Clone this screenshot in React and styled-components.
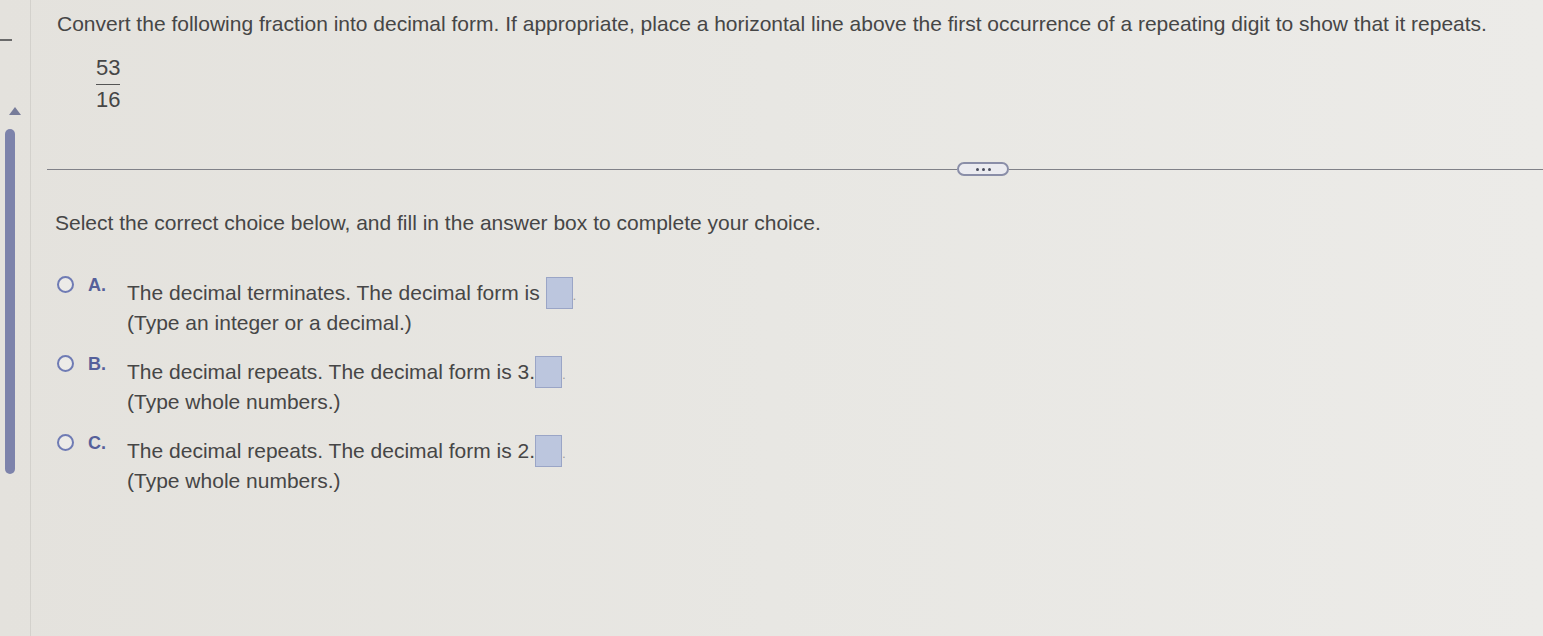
import React from 'react';
import styled, { createGlobalStyle } from 'styled-components';

const GlobalStyle = createGlobalStyle`
  html, body {
    margin: 0;
    padding: 0;
  }
  body {
    background: linear-gradient(90deg, #e4e2dd 0%, #e8e7e3 50%, #ecebe8 100%);
    font-family: "Liberation Sans", Arial, sans-serif;
    color: #464646;
  }
`;

const Page = styled.div`
  display: flex;
  height: 636px;
  overflow: hidden;
`;

const Gutter = styled.aside`
  width: 31px;
  flex-shrink: 0;
  border-right: 1px solid #d3d1cc;
  display: flex;
  flex-direction: column;
  align-items: flex-start;
  padding-top: 39px;
  box-sizing: border-box;
`;

const TopMark = styled.div`
  width: 12px;
  height: 2px;
  background: #6a6a6a;
`;

const ArrowUp = styled.div`
  margin: 66px 0 0 9px;
  width: 0;
  height: 0;
  border-left: 6px solid transparent;
  border-right: 6px solid transparent;
  border-bottom: 8px solid #777c9a;
`;

const Thumb = styled.div`
  margin: 14px 0 0 5px;
  width: 10px;
  height: 345px;
  border-radius: 5px;
  background: #7d83ab;
`;

const Main = styled.main`
  flex: 1;
  padding-top: 12px;
`;

const Question = styled.p`
  margin: 0 0 0 26px;
  font-size: 21px;
  line-height: 24px;
  white-space: nowrap;
`;

const Fraction = styled.div`
  display: inline-flex;
  flex-direction: column;
  align-items: center;
  margin: 20px 0 0 65px;
  font-size: 22px;
  line-height: 24px;
`;

const FractionBar = styled.span`
  align-self: stretch;
  height: 1px;
  margin: 4px 0 3px;
  background: #555;
`;

const DividerRow = styled.div`
  display: flex;
  align-items: center;
  margin-top: 50px;
  padding-left: 16px;
`;

const Rule = styled.div`
  height: 1px;
  background: #808188;
  flex: ${p => (p.$fill ? '1' : '0 0 910px')};
`;

const MorePill = styled.div`
  width: 52px;
  height: 14px;
  box-sizing: border-box;
  border: 2px solid #8a8ea8;
  border-radius: 7px;
  background: #ebebf0;
  display: flex;
  align-items: center;
  justify-content: center;
  gap: 3px;
`;

const Dot = styled.span`
  width: 3px;
  height: 3px;
  border-radius: 50%;
  background: #4a4d5e;
`;

const Prompt = styled.p`
  margin: 35px 0 0 24px;
  font-size: 21px;
  line-height: 24px;
`;

const Choices = styled.div`
  display: flex;
  flex-direction: column;
  gap: 20px;
  margin: 42px 0 0 26px;
`;

const Choice = styled.div`
  display: grid;
  grid-template-columns: 31px 39px auto;
  align-items: start;
`;

const Radio = styled.span`
  width: 17px;
  height: 17px;
  margin-top: -1px;
  box-sizing: border-box;
  border: 2px solid #6f7bb4;
  border-radius: 50%;
  background: #ecebe8;
`;

const Letter = styled.span`
  font-size: 18px;
  font-weight: bold;
  line-height: 17px;
  color: #55609a;
`;

const Body = styled.div`
  display: flex;
  flex-direction: column;
  font-size: 21px;
`;

const FirstLine = styled.div`
  display: flex;
  align-items: center;
  height: 32px;
  white-space: nowrap;
`;

const Hint = styled.div`
  line-height: 27px;
`;

const AnswerBox = styled.span`
  display: inline-block;
  width: 27px;
  height: 32px;
  margin-left: ${p => p.$gap}px;
  box-sizing: border-box;
  border: 1px solid #9aa5c6;
  background: #bcc6de;
`;

const Stop = styled.span`
  font-size: 12px;
  align-self: flex-end;
  margin-bottom: 6px;
  color: #999;
`;

const choices = [
  { letter: 'A.', text: 'The decimal terminates. The decimal form is', gap: 6, hint: '(Type an integer or a decimal.)' },
  { letter: 'B.', text: 'The decimal repeats. The decimal form is 3.', gap: 0, hint: '(Type whole numbers.)' },
  { letter: 'C.', text: 'The decimal repeats. The decimal form is 2.', gap: 0, hint: '(Type whole numbers.)' },
];

const App = () => {
  return (
    <Page>
      <GlobalStyle />
      <Gutter>
        <TopMark />
        <ArrowUp />
        <Thumb />
      </Gutter>
      <Main>
        <Question>
          Convert the following fraction into decimal form. If appropriate, place a horizontal line above the first occurrence of a repeating digit to show that it repeats.
        </Question>
        <Fraction>
          <span>53</span>
          <FractionBar />
          <span>16</span>
        </Fraction>
        <DividerRow>
          <Rule />
          <MorePill>
            <Dot />
            <Dot />
            <Dot />
          </MorePill>
          <Rule $fill />
        </DividerRow>
        <Prompt>Select the correct choice below, and fill in the answer box to complete your choice.</Prompt>
        <Choices>
          {choices.map(c => (
            <Choice key={c.letter}>
              <Radio />
              <Letter>{c.letter}</Letter>
              <Body>
                <FirstLine>
                  <span>{c.text}</span>
                  <AnswerBox $gap={c.gap} />
                  <Stop>.</Stop>
                </FirstLine>
                <Hint>{c.hint}</Hint>
              </Body>
            </Choice>
          ))}
        </Choices>
      </Main>
    </Page>
  );
};

export default App;
